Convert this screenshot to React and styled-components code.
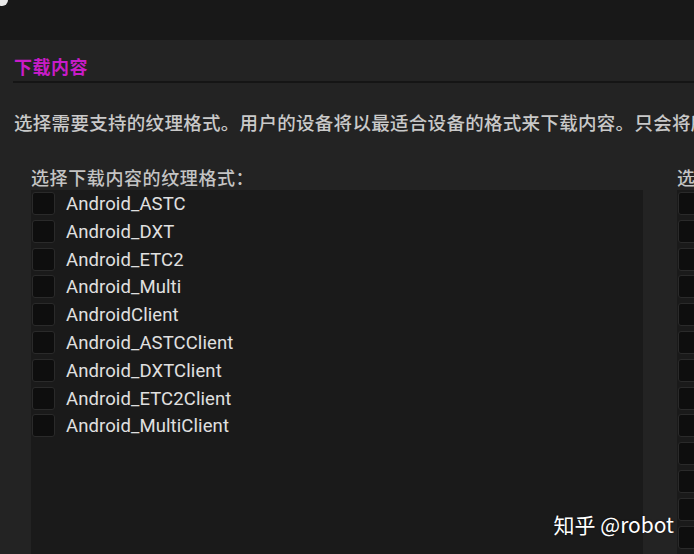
import styled, { createGlobalStyle } from "styled-components";

const formats = [
  "Android_ASTC",
  "Android_DXT",
  "Android_ETC2",
  "Android_Multi",
  "AndroidClient",
  "Android_ASTCClient",
  "Android_DXTClient",
  "Android_ETC2Client",
  "Android_MultiClient",
];

const cookFormats = [
  "Android_ASTC",
  "Android_DXT",
  "Android_ETC2",
  "Android_Multi",
  "AndroidClient",
  "Android_ASTCClient",
  "Android_DXTClient",
  "Android_ETC2Client",
  "Android_MultiClient",
  "AndroidServer",
  "Android_ASTCServer",
  "Android_DXTServer",
  "Android_ETC2Server",
];

const GlobalStyle = createGlobalStyle`
  html, body {
    margin: 0;
    padding: 0;
    background: #222222;
  }
`;

export default function App() {
  return (
    <>
      <GlobalStyle />
      <Page>
        <TopBar>
          <Corner viewBox="0 0 10 8" width="10" height="8">
            <circle cx="2" cy="0" r="6" fill="#e8e8e8" />
          </Corner>
        </TopBar>
        <Panel>
          <Heading>下载内容</Heading>
          <Description>
            选择需要支持的纹理格式。用户的设备将以最适合设备的格式来下载内容。只会将所选格式的内容打包。
          </Description>
          <Columns>
            <Column $width={612}>
              <Label>选择下载内容的纹理格式：</Label>
              <List>
                {formats.map((name) => (
                  <Row key={name}>
                    <Check />
                    <ItemName>{name}</ItemName>
                  </Row>
                ))}
              </List>
            </Column>
            <Column $width={400}>
              <Label>选择要烘焙的纹理格式：</Label>
              <List>
                {cookFormats.map((name) => (
                  <Row key={name}>
                    <Check />
                    <ItemName>{name}</ItemName>
                  </Row>
                ))}
              </List>
            </Column>
          </Columns>
        </Panel>
        <Watermark>知乎 @robot</Watermark>
      </Page>
    </>
  );
}

const Page = styled.div`
  position: relative;
  width: 694px;
  height: 554px;
  overflow: hidden;
  display: flex;
  flex-direction: column;
  background: #222222;
  font-family: "Noto Sans CJK SC", "Noto Sans", sans-serif;
`;

const TopBar = styled.div`
  height: 40px;
  flex-shrink: 0;
  background: #181818;
`;

const Corner = styled.svg`
  display: block;
`;

const Panel = styled.div`
  flex: 1;
  min-height: 0;
  display: flex;
  flex-direction: column;
  padding: 14px 0 0 14px;
  background: #232323;
`;

const Heading = styled.div`
  font-size: 18px;
  font-weight: 700;
  line-height: 24px;
  letter-spacing: 0.5px;
  color: #c81cc8;
  padding-bottom: 3px;
  border-bottom: 2px solid #151515;
  margin-left: -1px;
  padding-left: 1px;
`;

const Description = styled.div`
  margin-top: 27px;
  font-size: 18.5px;
  font-weight: 500;
  line-height: 24px;
  letter-spacing: 0.3px;
  color: #c9c9c9;
  white-space: nowrap;
`;

const Columns = styled.div`
  flex: 1;
  min-height: 0;
  display: flex;
  gap: 34px;
  margin-top: 31px;
  padding-left: 17px;
`;

const Column = styled.div`
  width: ${(props) => props.$width}px;
  flex-shrink: 0;
  display: flex;
  flex-direction: column;
`;

const Label = styled.div`
  font-size: 18px;
  font-weight: 500;
  line-height: 25px;
  letter-spacing: 0.6px;
  color: #c4c4c4;
  white-space: nowrap;
`;

const List = styled.div`
  flex: 1;
  background: #1a1a1a;
  padding: 2px 0 0 1px;
`;

const Row = styled.div`
  height: 27.8px;
  display: flex;
  align-items: flex-start;
`;

const Check = styled.div`
  width: 23px;
  height: 23px;
  flex-shrink: 0;
  box-sizing: border-box;
  border: 1px solid #2a2a2a;
  border-radius: 3px;
  background: #0e0e0e;
  margin-right: 11px;
`;

const ItemName = styled.span`
  font-family: Roboto, "Liberation Sans", sans-serif;
  font-size: 18.5px;
  font-weight: 400;
  line-height: 24px;
  letter-spacing: 0.1px;
  color: #e0e0e0;
  white-space: nowrap;
`;

const Watermark = styled.div`
  position: absolute;
  right: 20px;
  bottom: 16px;
  font-size: 21px;
  line-height: 28px;
  color: #ffffff;
  text-shadow: 0 0 2px rgba(0, 0, 0, 0.5);
  white-space: nowrap;
`;
